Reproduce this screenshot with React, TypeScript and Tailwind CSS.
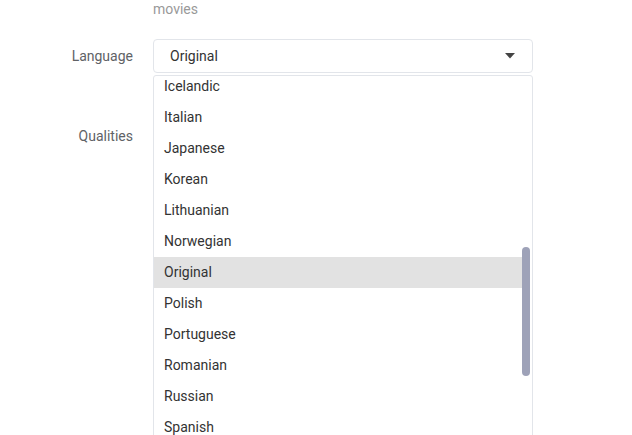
import React from "react";

const items = [
  "Icelandic",
  "Italian",
  "Japanese",
  "Korean",
  "Lithuanian",
  "Norwegian",
  "Original",
  "Polish",
  "Portuguese",
  "Romanian",
  "Russian",
  "Spanish",
  "Swedish",
];

export default function App() {
  return (
    <div
      className="w-[632px] h-[435px] overflow-hidden bg-white relative"
      style={{ fontFamily: "Roboto, 'Liberation Sans', sans-serif" }}
    >
      <div className="flex flex-col">
        <div className="flex h-[18px] items-center">
          <div className="w-[153px] shrink-0" />
          <span className="text-[14px] text-[#999999] leading-none -mt-[1px]">movies</span>
        </div>
        <div className="flex items-center mt-[21px] h-[34px]">
          <div className="w-[133px] shrink-0 text-right text-[14px] text-[#606266]">Language</div>
          <div className="w-[20px] shrink-0" />
          <div className="relative w-[380px] h-[34px]">
            <div className="w-full h-full border border-[#e2e5ea] rounded-[4px] flex items-center pl-[16px] pr-[16px] justify-between">
              <span className="text-[14px] text-[#333333]">Original</span>
              <svg width="10" height="6" viewBox="0 0 10 6" className="mr-[1px]">
                <path d="M0 0 H10 L5 5.5 Z" fill="#444444" />
              </svg>
            </div>
            <div className="absolute left-0 top-[36px] w-[380px] h-[420px] border border-[#e2e5ea] rounded-t-[3px] bg-white overflow-hidden z-10">
              <div className="-mt-[5.5px] flex flex-col">
                {items.map((it) => (
                  <div
                    key={it}
                    className={
                      "h-[31px] flex items-center pl-[10px] text-[14px] text-[#333333] mr-[10px] " +
                      (it === "Original" ? "bg-[#e2e2e2]" : "")
                    }
                  >
                    {it}
                  </div>
                ))}
              </div>
              <div className="absolute right-[2px] top-[171px] w-[8px] h-[129px] rounded-[4px] bg-[#9ea2b8]" />
            </div>
          </div>
        </div>
        <div className="flex items-center mt-[46px] h-[34px]">
          <div className="w-[133px] shrink-0 text-right text-[14px] text-[#606266]">Qualities</div>
        </div>
      </div>
    </div>
  );
}
